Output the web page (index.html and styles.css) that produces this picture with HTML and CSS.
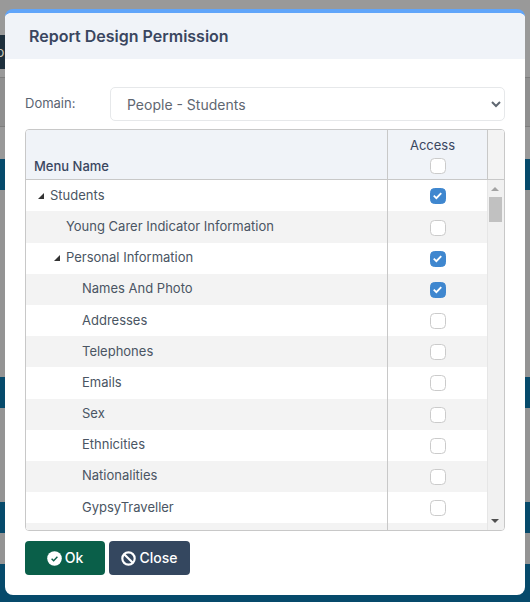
FILE: index.html
```html
<!DOCTYPE html>
<html lang="en">
<head>
<meta charset="utf-8">
<title>Report Design Permission</title>
<link rel="stylesheet" href="styles.css">
</head>
<body>
<div class="backdrop">
  <div class="bg bg-gap35"></div>
  <div class="bg bg-dark"><span class="bg-glyph">o</span></div>
  <div class="bg bg-gap8"></div>
  <div class="bg bg-line"></div>
  <div class="bg bg-mid"></div>
  <div class="bg bg-line"></div>
  <div class="bg bg-gap32"></div>
  <div class="bg bg-teal h31"></div>
  <div class="bg bg-gap187"></div>
  <div class="bg bg-teal h31"></div>
  <div class="bg bg-gap94"></div>
  <div class="bg bg-teal h31"></div>
  <div class="bg bg-gap31"></div>
  <div class="bg bg-teal h38"></div>
</div>
<div class="modal">
  <header class="modal-head"><h1>Report Design Permission</h1></header>
  <div class="modal-body">
    <div class="domain">
      <label class="domain-label" for="domain">Domain:</label>
      <select id="domain" class="domain-select"><option>People - Students</option></select>
    </div>
    <div class="grid">
      <div class="grid-head">
        <div class="th th-name">Menu Name</div>
        <div class="th th-access"><span class="access-label">Access</span><span class="cb"></span></div>
        <div class="th th-spare"></div>
      </div>
      <div class="grid-body">
        <div class="rows">
          <div class="row"><div class="name l0"><i class="tri"></i>Students</div><div class="cell"><span class="cb on"><svg viewBox="0 0 16 16"><path d="M3.4 8.2l3.2 3 6-6.2" fill="none" stroke="#fff" stroke-width="2.3"/></svg></span></div></div>
          <div class="row alt"><div class="name l1">Young Carer Indicator Information</div><div class="cell"><span class="cb"></span></div></div>
          <div class="row"><div class="name l1b"><i class="tri"></i>Personal Information</div><div class="cell"><span class="cb on"><svg viewBox="0 0 16 16"><path d="M3.4 8.2l3.2 3 6-6.2" fill="none" stroke="#fff" stroke-width="2.3"/></svg></span></div></div>
          <div class="row alt"><div class="name l2">Names And Photo</div><div class="cell"><span class="cb on"><svg viewBox="0 0 16 16"><path d="M3.4 8.2l3.2 3 6-6.2" fill="none" stroke="#fff" stroke-width="2.3"/></svg></span></div></div>
          <div class="row"><div class="name l2">Addresses</div><div class="cell"><span class="cb"></span></div></div>
          <div class="row alt"><div class="name l2">Telephones</div><div class="cell"><span class="cb"></span></div></div>
          <div class="row"><div class="name l2">Emails</div><div class="cell"><span class="cb"></span></div></div>
          <div class="row alt"><div class="name l2">Sex</div><div class="cell"><span class="cb"></span></div></div>
          <div class="row"><div class="name l2">Ethnicities</div><div class="cell"><span class="cb"></span></div></div>
          <div class="row alt"><div class="name l2">Nationalities</div><div class="cell"><span class="cb"></span></div></div>
          <div class="row"><div class="name l2">GypsyTraveller</div><div class="cell"><span class="cb"></span></div></div>
          <div class="row alt"><div class="name l2"></div><div class="cell"></div></div>
        </div>
        <div class="scrollbar">
          <span class="arrow up"></span>
          <span class="thumb"></span>
          <span class="arrow down"></span>
        </div>
      </div>
    </div>
    <div class="actions">
      <button class="btn btn-ok" type="button"><svg class="ico" viewBox="0 0 16 16"><circle cx="8" cy="8" r="7.8" fill="#fff"/><path d="M4.9 8.2l2.2 2.2 4-4.2" fill="none" stroke="#0a5f49" stroke-width="1.5"/></svg>Ok</button>
      <button class="btn btn-close" type="button"><svg class="ico" viewBox="0 0 16 16"><circle cx="8" cy="8" r="6.6" fill="none" stroke="#fff" stroke-width="2.3"/><path d="M3.4 3.4l9.2 9.2" stroke="#fff" stroke-width="2.3"/></svg>Close</button>
    </div>
  </div>
</div>
</body>
</html>
```
FILE: styles.css
```css
* { box-sizing: border-box; }
html, body { margin: 0; height: 100%; }
body {
  position: relative;
  overflow: hidden;
  background: #999;
  font-family: Inter, "Liberation Sans", sans-serif;
  color: #3c4a5e;
}
.backdrop { display: flex; flex-direction: column; height: 602px; }
.bg { flex: none; }
.bg-gap35 { height: 35px; }
.bg-dark { height: 34px; background: #1e2f3c; margin-right: 50%; color: #c9c4b8; font-size: 14px; line-height: 34px; overflow: hidden; }
.bg-glyph { margin-left: -4px; }
.bg-gap8 { height: 8px; }
.bg-line { height: 1px; background: #7d7d7d; }
.bg-mid { height: 48px; background: #8f8f8f; }
.bg-gap32 { height: 32px; }
.bg-teal { background: #064a6b; }
.h31 { height: 31px; }
.h38 { height: 38px; }
.bg-gap187 { height: 187px; background: #949494; }
.bg-gap94 { height: 94px; background: #949494; }
.bg-gap31 { height: 31px; background: #949494; }

.modal {
  position: absolute;
  left: 5px;
  top: 9px;
  width: 520px;
  height: 586px;
  background: #fff;
  border-top: 4px solid #60a5fa;
  border-radius: 8px;
}
.modal-head {
  height: 46px;
  background: #f0f3f8;
  padding: 0 24px;
  display: flex;
  align-items: center;
  border-radius: 6px 6px 0 0;
}
.modal-head h1 {
  margin: 0;
  font-size: 16px;
  font-weight: 600;
  color: #3a4660;
}
.modal-body { padding: 28px 20px 0; }
.domain { display: flex; align-items: center; height: 34px; }
.domain-label { width: 85px; font-size: 13px; color: #5a6472; position: relative; bottom: 1px; }
.domain-select {
  flex: 1;
  height: 34px;
  padding: 0 12px;
  border: 1px solid #e6e8ea;
  border-radius: 5px;
  background-color: #fff;
  font: 14px Inter, "Liberation Sans", sans-serif;
  color: #5f6771;
}
.grid {
  margin-top: 8px;
  height: 402px;
  border: 1px solid #c8c8c8;
  border-radius: 4px;
}
.grid-head {
  display: grid;
  grid-template-columns: 361px 101px 1fr;
  height: 50px;
  border-bottom: 1px solid #c8c8c8;
  background: #f0f3f8;
  font-size: 13px;
  color: #3a4660;
  border-radius: 3px 3px 0 0;
}
.th-name { padding: 0 8px 5px; display: flex; align-items: flex-end; font-weight: 500; }
.th-access {
  border-left: 1px solid #c8c8c8;
  border-right: 1px solid #c8c8c8;
  display: flex;
  flex-direction: column;
  align-items: center;
  font-weight: 400;
  padding-top: 7px;
  gap: 5px;
}
.access-label { margin-right: 10px; }
.th-spare { background: #f3f3f3; border-radius: 0 3px 0 0; }
.grid-body { display: flex; height: 350px; overflow: hidden; border-radius: 0 0 3px 3px; }
.rows { width: 462px; flex: none; padding-top: 0.2px; background: #fff; }
.row {
  display: grid;
  grid-template-columns: 361px 101px;
  height: 31.2px;
  background: #fff;
  font-size: 13px;
  color: #4a5563;
}
.row.alt { background: #f3f3f3; }
.name { display: flex; align-items: center; padding-bottom: 2px; }
.l0 { padding-left: 12px; }
.l1 { padding-left: 40px; }
.l1b { padding-left: 28px; }
.l2 { padding-left: 56px; }
.tri {
  width: 0;
  height: 0;
  margin-right: 6px;
  margin-top: 2px;
  border-style: solid;
  border-width: 0 0 6px 6px;
  border-color: transparent transparent #333 transparent;
}
.cell {
  border-left: 1px solid #c8c8c8;
  border-right: 1px solid #e6e6e6;
  display: flex;
  align-items: center;
  justify-content: center;
  padding-top: 1.13px;
}
.cb {
  display: block;
  width: 16px;
  height: 16px;
  background: #fff;
  border: 1.5px solid #cbcbcb;
  border-radius: 4.5px;
}
.cb.on { background: #3f87cf; border-color: #3f87cf; }
.cb.on svg { display: block; width: 13px; height: 13px; }
.scrollbar {
  flex: 1;
  position: relative;
  background: #f1f1f1;
}
.thumb {
  position: absolute;
  left: 1px;
  top: 17px;
  width: 13px;
  height: 25px;
  background: #c1c1c1;
}
.arrow {
  position: absolute;
  left: 3px;
  width: 0;
  height: 0;
  border-left: 4px solid transparent;
  border-right: 4px solid transparent;
}
.arrow.up { top: 7px; border-bottom: 4px solid #a3a3a3; }
.arrow.down { bottom: 7px; border-top: 4px solid #505050; }
.actions { display: flex; gap: 4px; margin-top: 10px; }
.btn {
  height: 34px;
  border: 0;
  border-radius: 4px;
  color: #fff;
  font: 500 14px Inter, "Liberation Sans", sans-serif;
  display: flex;
  align-items: center;
  justify-content: center;
  gap: 3px;
  padding: 0 0 2px;
}
.btn-ok { width: 80px; background: #0a5f49; }
.btn-close { width: 81px; background: #34475f; }
.ico { width: 15px; height: 15px; flex: none; margin-top: 2px; }
```
